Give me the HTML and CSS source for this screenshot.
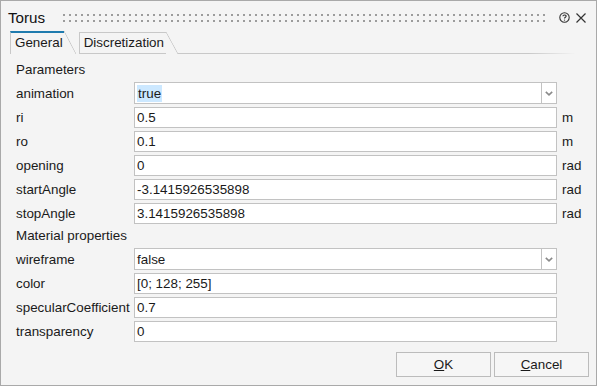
FILE: index.html
```html
<!DOCTYPE html>
<html lang="en">
<head>
    <meta charset="UTF-8">
    <title>Torus</title>
    <link rel="stylesheet" href="styles.css">
</head>
<body>
    <div class="window">
        <div class="titlebar">
            <span class="title">Torus</span>
            <div class="grip"></div>
            <svg class="help-icon" width="11" height="11" viewBox="0 0 11 11">
                <circle cx="5.5" cy="5.5" r="4.7" fill="none" stroke="#333" stroke-width="1.1"/>
                <path d="M3.9 4.3 C3.9 2.5 7.1 2.5 7.1 4.2 C7.1 5.3 5.5 5.3 5.5 6.6" fill="none" stroke="#333" stroke-width="1.1"/>
                <circle cx="5.5" cy="8.1" r="0.7" fill="#333"/>
            </svg>
            <svg class="close-icon" width="10" height="10" viewBox="0 0 10 10">
                <path d="M0.5 0.5 L9.5 9.5 M9.5 0.5 L0.5 9.5" stroke="#333" stroke-width="1.2"/>
            </svg>
        </div>

        <div class="tabs">
            <div class="tab active">General</div>
            <div class="tab">Discretization</div>
            <div class="tab-fill"></div>
        </div>

        <div class="panel">
            <div class="group-title">Parameters</div>
            <div class="row">
                <label>animation</label>
                <div class="combo">
                    <span class="combo-value"><span class="selected">true</span></span>
                    <span class="combo-btn">
                        <svg width="8" height="5" viewBox="0 0 8 5"><path d="M0.8 0.8 L4 3.8 L7.2 0.8" fill="none" stroke="#8a8a8a" stroke-width="1.6"/></svg>
                    </span>
                </div>
            </div>
            <div class="row">
                <label>ri</label>
                <input class="field" type="text" value="0.5">
                <span class="unit">m</span>
            </div>
            <div class="row">
                <label>ro</label>
                <input class="field" type="text" value="0.1">
                <span class="unit">m</span>
            </div>
            <div class="row">
                <label>opening</label>
                <input class="field" type="text" value="0">
                <span class="unit">rad</span>
            </div>
            <div class="row">
                <label>startAngle</label>
                <input class="field" type="text" value="-3.1415926535898">
                <span class="unit">rad</span>
            </div>
            <div class="row">
                <label>stopAngle</label>
                <input class="field" type="text" value="3.1415926535898">
                <span class="unit">rad</span>
            </div>

            <div class="group-title">Material properties</div>
            <div class="row">
                <label>wireframe</label>
                <div class="combo">
                    <span class="combo-value">false</span>
                    <span class="combo-btn">
                        <svg width="8" height="5" viewBox="0 0 8 5"><path d="M0.8 0.8 L4 3.8 L7.2 0.8" fill="none" stroke="#8a8a8a" stroke-width="1.6"/></svg>
                    </span>
                </div>
            </div>
            <div class="row">
                <label>color</label>
                <input class="field" type="text" value="[0; 128; 255]">
            </div>
            <div class="row">
                <label>specularCoefficient</label>
                <input class="field" type="text" value="0.7">
            </div>
            <div class="row">
                <label>transparency</label>
                <input class="field" type="text" value="0">
            </div>
        </div>

        <div class="footer">
            <button type="button" class="dlg-btn"><u>O</u>K</button>
            <button type="button" class="dlg-btn"><u>C</u>ancel</button>
        </div>
    </div>
</body>
</html>
```

FILE: styles.css
```css
html, body {
    margin: 0;
    padding: 0;
}

body {
    font-family: 'Liberation Sans', Arial, sans-serif;
    font-size: 13.4px;
    color: #1a1a1a;
    background: #f4f4f4;
}

.window {
    width: 597px;
    height: 386px;
    box-sizing: border-box;
    border: 1px solid #a9a9a9;
    background: #f4f4f4;
    display: flex;
    flex-direction: column;
}

/* title bar */
.titlebar {
    height: 30px;
    display: flex;
    align-items: flex-start;
    padding: 0 10px 0 7px;
    box-sizing: border-box;
}

.title {
    font-size: 15.2px;
    color: #111;
    margin-top: 8px;
}

.grip {
    flex: 1;
    height: 12px;
    margin: 11px 13px 0 16px;
    background-image: radial-gradient(circle, #9c9c9c 1px, transparent 1.3px);
    background-size: 6px 6px;
}

.help-icon {
    margin-top: 11px;
}

.close-icon {
    margin: 12px 0 0 6px;
}

/* tabs */
.tabs {
    display: flex;
    align-items: flex-end;
    height: 23px;
    padding-left: 9px;
}

.tab {
    position: relative;
    height: 20px;
    line-height: 20px;
    padding: 0 14px 0 4px;
    margin-top: 1px;
    border-left: 1px solid #c8c8c8;
    border-top: 1px solid #c8c8c8;
    border-bottom: 1px solid #c8c8c8;
    color: #1a1a1a;
}

.tab::after {
    content: "";
    position: absolute;
    top: -1px;
    right: 0;
    width: 12px;
    height: 22px;
    background: #f4f4f4 linear-gradient(to top right, transparent calc(50% - 0.7px), #c8c8c8 50%, transparent calc(50% + 0.7px));
}

.tab.active {
    height: 21px;
    line-height: 20px;
    margin-top: 0;
    padding-right: 13px;
    margin-right: 3px;
    border-top: 2px solid #1f7bae;
    border-bottom: none;
}

.tab.active::after {
    top: -2px;
    height: 23px;
}

.tab-fill {
    flex: 1;
    height: 22px;
    margin-right: 20px;
    background: linear-gradient(to right, #c8c8c8 88%, rgba(200, 200, 200, 0)) left bottom / 100% 1px no-repeat;
}

/* property grid */
.panel {
    flex: 1;
    padding: 5px 0 0 15px;
}

.group-title {
    height: 22px;
    line-height: 22px;
}

.row {
    display: grid;
    grid-template-columns: 118px 423px auto;
    align-items: center;
    height: 24px;
}

.row label {
    white-space: nowrap;
}

.field {
    height: 21px;
    box-sizing: border-box;
    margin: 0;
    padding: 0 2px;
    border: 1px solid #c2c2c2;
    background: #fff;
    font-family: inherit;
    font-size: inherit;
    color: #1a1a1a;
    outline: none;
}

.unit {
    padding-left: 5px;
}

.combo {
    display: flex;
    height: 22px;
}

.combo-value {
    flex: 1;
    display: flex;
    align-items: center;
    padding: 0 2px;
    border: 1px solid #c2c2c2;
    background: #fff;
}

.selected {
    background: #cce8ff;
    line-height: 17px;
    padding: 0 1px;
}

.combo-btn {
    width: 14px;
    display: flex;
    align-items: center;
    justify-content: center;
    border: 1px solid #c2c2c2;
    border-left: none;
    background: #fff;
}

/* buttons */
.footer {
    display: flex;
    justify-content: flex-end;
    gap: 3px;
    padding: 0 7px 8px 0;
}

.dlg-btn {
    width: 95px;
    height: 25px;
    margin: 0;
    border: 1px solid #bcbcbc;
    background: #f6f6f6;
    font-family: inherit;
    font-size: inherit;
    color: #1a1a1a;
}
```
